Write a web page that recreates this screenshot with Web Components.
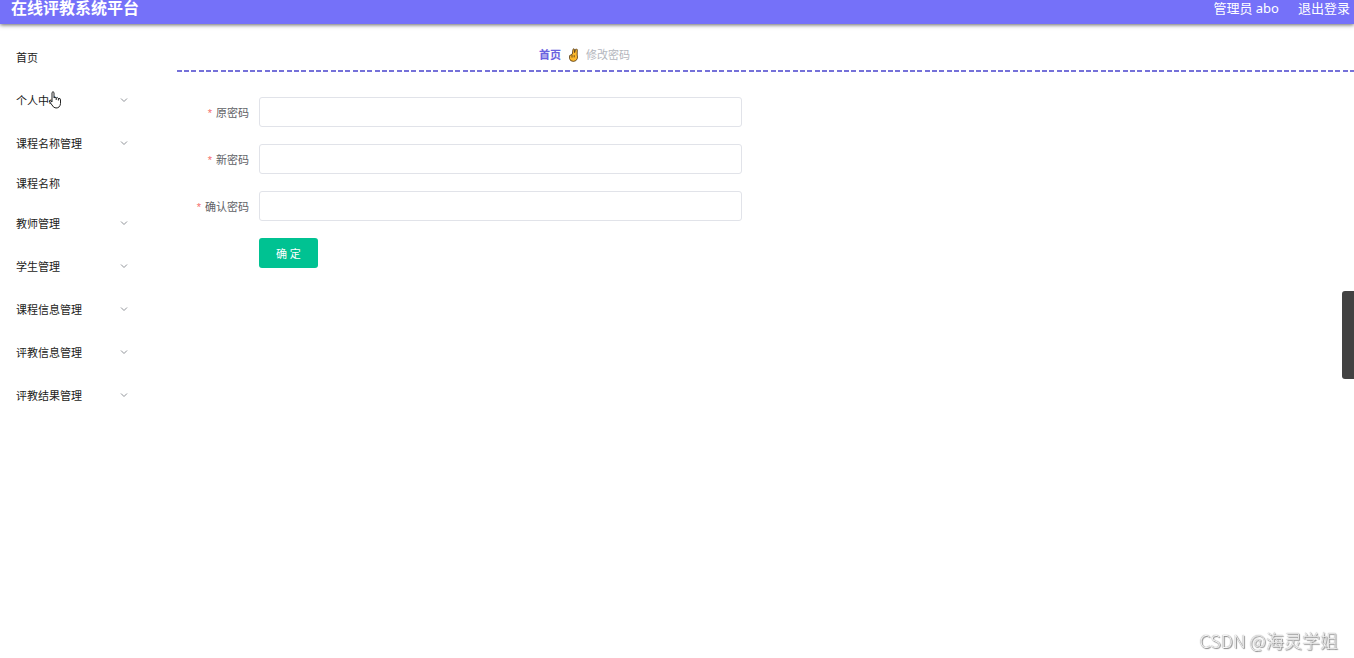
<!DOCTYPE html>
<html lang="zh-CN">
<head>
<meta charset="utf-8">
<title>在线评教系统平台</title>
<style>
    body {
        margin: 0;
        min-height: 100vh;
        background: #fff;
        font-family: "Noto Sans", "Noto Sans CJK SC", sans-serif;
    }
</style>
</head>
<body>
<admin-app></admin-app>

<script>
const define = (name, html) => {
    const template = document.createElement("template");
    template.innerHTML = html;
    return class extends HTMLElement {
        constructor() {
            super();
            this.attachShadow({ mode: "open" }).append(template.content.cloneNode(true));
        }
        static tag = name;
    };
};

class AppHeader extends define("app-header", `
    <style>
        :host {
            display: flex;
            justify-content: space-between;
            align-items: center;
            padding: 0 4px 8px 11px;
            background: #7571f9;
            box-shadow: 0 1px 4px rgba(0, 0, 0, 0.6);
            color: #fff;
            line-height: 16px;
        }
        h1 {
            margin: 0;
            font-size: 16px;
            line-height: 16px;
        }
        .account {
            display: flex;
            gap: 19px;
            font-size: 13px;
        }
        a {
            color: inherit;
            text-decoration: none;
        }
    </style>
    <h1><slot></slot></h1>
    <div class="account">
        <span>管理员 abo</span>
        <a href="#logout">退出登录</a>
    </div>
`) {}

class MenuItem extends define("menu-item", `
    <style>
        :host {
            display: block;
        }
        a {
            display: flex;
            align-items: center;
            justify-content: space-between;
            height: 43px;
            padding: 0 16px;
            color: #1b1b20;
            font-size: 11px;
            text-decoration: none;
        }
        :host([sub]) a {
            height: 37px;
        }
        svg {
            display: none;
            width: 8px;
            height: 8px;
        }
        :host([expandable]) svg {
            display: block;
        }
    </style>
    <a href="#">
        <span><slot></slot></span>
        <svg viewBox="0 0 8 8" fill="none" stroke="#909399"><path d="M1 2.5 4 5.5 7 2.5"/></svg>
    </a>
`) {}

class SideMenu extends define("side-menu", `
    <style>
        :host {
            display: block;
            box-sizing: border-box;
            width: 144px;
            padding-top: 11px;
        }
    </style>
    <nav><slot></slot></nav>
`) {}

class BreadCrumb extends define("bread-crumb", `
    <style>
        :host {
            display: block;
            padding: 23px 0 9px 362px;
            font-size: 11px;
            line-height: 16px;
            background: repeating-linear-gradient(90deg,
                #7571d9 0 5px, transparent 5px 7px,
                #7571d9 7px 12px, transparent 12px 14px,
                #7571d9 14px 19px, transparent 19px 22px) bottom / 100% 2px no-repeat;
        }
        nav {
            display: flex;
            align-items: center;
            gap: 7px;
        }
        a {
            color: #6a62e0;
            font-weight: bold;
            text-decoration: none;
        }
        svg {
            width: 11px;
            height: 14px;
        }
        span {
            color: #b3b6bd;
        }
    </style>
    <nav aria-label="面包屑">
        <a href="#">首页</a>
        <svg viewBox="0 0 11 14" stroke="#4b3212" stroke-width=".8" fill="#fdb92e" stroke-linejoin="round">
            <path d="M1.6 7.6 4.3 6.2 5 1.2Q5.6.4 6.4 1.2L6.6 4.6 7.7 1.2Q8.8.6 9.3 1.7L9.2 7Q9.8 9 9.2 10.8 8.2 13.4 5.4 13.4 2 13.4 1.5 10.5Z"/>
            <path d="M4 7V9.6M6.2 7.2V9.4" fill="none"/>
        </svg>
        <span>修改密码</span>
    </nav>
`) {}

class FormField extends define("form-field", `
    <style>
        :host {
            display: flex;
            align-items: center;
        }
        label {
            box-sizing: border-box;
            width: 82px;
            padding-right: 10px;
            color: #606266;
            font-size: 11px;
            text-align: right;
            white-space: nowrap;
        }
        label::before {
            content: "*";
            margin-right: 4px;
            color: #f56c6c;
            font-family: "Liberation Sans", sans-serif;
        }
        input {
            box-sizing: border-box;
            flex: 1;
            min-width: 0;
            height: 30px;
            padding: 0 12px;
            border: 1px solid #e1e3e9;
            border-radius: 3px;
            outline: none;
            font: inherit;
            font-size: 11px;
        }
    </style>
    <label for="field"></label>
    <input id="field" type="password">
`) {
    connectedCallback() {
        this.shadowRoot.querySelector("label").textContent = this.getAttribute("label");
    }
}

class PasswordForm extends define("password-form", `
    <style>
        :host {
            display: block;
            width: 48%;
            min-width: 300px;
            padding-top: 25px;
        }
        form {
            display: flex;
            flex-direction: column;
            gap: 17px;
        }
        button {
            align-self: flex-start;
            height: 30px;
            margin-left: 82px;
            padding: 0 17px;
            border: 0;
            border-radius: 3px;
            background: #00c292;
            color: #fff;
            font: inherit;
            font-size: 11px;
        }
    </style>
    <form>
        <form-field label="原密码"></form-field>
        <form-field label="新密码"></form-field>
        <form-field label="确认密码"></form-field>
        <button type="button">确 定</button>
    </form>
`) {}

class AdminApp extends define("admin-app", `
    <style>
        :host {
            display: block;
        }
        .body {
            display: flex;
            gap: 33px;
        }
        main {
            flex: 1;
            min-width: 0;
        }
        .cursor {
            position: absolute;
            left: 48px;
            top: 91px;
            width: 14px;
            height: 18px;
        }
        .handle {
            position: fixed;
            right: 0;
            top: 291px;
            width: 12px;
            height: 88px;
            border-radius: 3px 0 0 3px;
            background: #424242;
        }
        .watermark {
            position: fixed;
            right: 16px;
            bottom: 6px;
            color: #f4f4f4;
            font-size: 18px;
            line-height: 24px;
            font-family: "Noto Sans CJK SC", sans-serif;
            font-weight: 300;
            text-shadow: 0 0 1px #666, 1px 1px 1px #888;
        }
    </style>
    <app-header>在线评教系统平台</app-header>
    <div class="body">
        <side-menu>
            <menu-item>首页</menu-item>
            <menu-item expandable>个人中心</menu-item>
            <menu-item expandable>课程名称管理</menu-item>
            <menu-item sub>课程名称</menu-item>
            <menu-item expandable>教师管理</menu-item>
            <menu-item expandable>学生管理</menu-item>
            <menu-item expandable>课程信息管理</menu-item>
            <menu-item expandable>评教信息管理</menu-item>
            <menu-item expandable>评教结果管理</menu-item>
        </side-menu>
        <main>
            <bread-crumb></bread-crumb>
            <password-form></password-form>
        </main>
    </div>
    <svg class="cursor" viewBox="0 0 14 18" fill="#fff" stroke="#222" stroke-linejoin="round">
        <path d="M4 11V1.5Q5-.2 6 1.5V7Q7 5.2 8.2 7 9.4 5.6 10.4 7.5 12.4 6.6 12.5 9V12.5Q12 17 8 17 5.5 17 4 14L1 10Q1.5 8.5 4 11ZM8.2 7V9M10.4 7.5V9.5"/>
    </svg>
    <div class="handle"></div>
    <div class="watermark">CSDN @海灵学姐</div>
`) {}

[AppHeader, MenuItem, SideMenu, BreadCrumb, FormField, PasswordForm, AdminApp].forEach((element) => {
    customElements.define(element.tag, element);
});
</script>
</body>
</html>
